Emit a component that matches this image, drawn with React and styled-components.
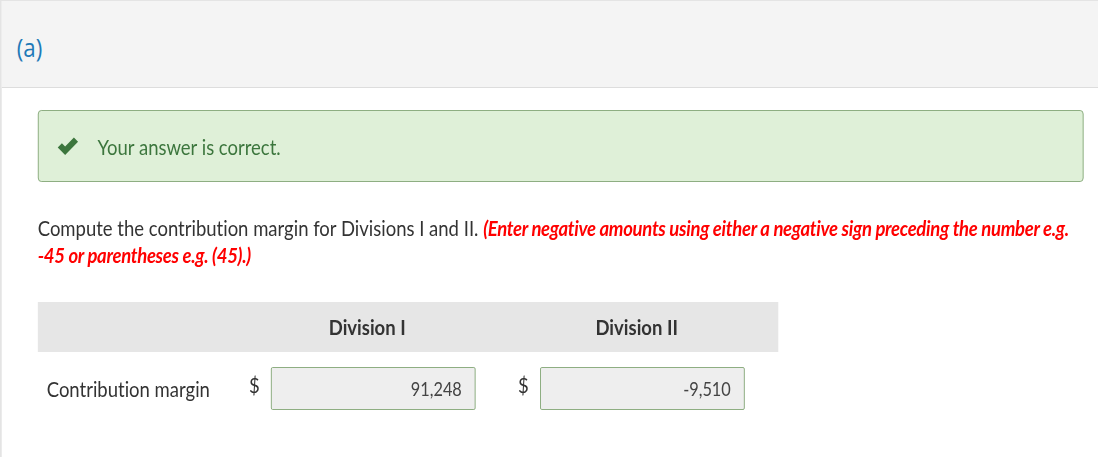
import React from "react";
import styled, { createGlobalStyle } from "styled-components";

/* The reference is rendered horizontally condensed; one scaleX on the
   whole sheet reproduces that while everything inside stays in normal flow. */
const SQUEEZE = 0.86;
const u = (px) => `${(px / SQUEEZE).toFixed(2)}px`;

const Global = createGlobalStyle`
  html, body { margin: 0; padding: 0; background: #fff; overflow: hidden; }
  body {
    font-family: Lato, "Liberation Sans", sans-serif;
    color: #333;
    font-variant-ligatures: none;
    font-feature-settings: "liga" 0, "clig" 0;
  }
`;

const Viewport = styled.div`
  width: 1098px;
  height: 457px;
  overflow: hidden;
`;

const Sheet = styled.div`
  width: ${u(1098)};
  height: 457px;
  box-sizing: border-box;
  border-left: ${u(2)} solid #e4e4e4;
  border-top: 1px solid #e4e4e4;
  transform: scaleX(${SQUEEZE});
  transform-origin: 0 0;
`;

const Header = styled.div`
  height: 87px;
  background: #f4f4f4;
  border-bottom: 1px solid #dddddd;
  display: flex;
  align-items: center;
  padding-left: ${u(15)};
  padding-top: 6px;
  box-sizing: border-box;
`;

const PartLabel = styled.span`
  font-family: "Open Sans", sans-serif;
  font-size: 26px;
  color: #1f7ab8;
`;

const Body = styled.div`
  padding: 22px ${u(14)} 0 ${u(36)};
`;

const Alert = styled.div`
  height: 72px;
  box-sizing: border-box;
  background: #dff0d8;
  border: 1px solid #86a97a;
  border-radius: 4px;
  display: flex;
  align-items: center;
  padding-left: ${u(17)};
  gap: ${u(18)};
`;

const AlertText = styled.span`
  font-size: 21.5px;
  color: #3c763d;
  margin-top: 1px;
`;

const Question = styled.p`
  margin: 33px 0 0 0;
  font-size: 21.5px;
  line-height: 27px;
  color: #333;
`;

const Hint = styled.span`
  color: #ff0000;
  font-weight: bold;
  font-style: italic;
  letter-spacing: -0.35px;
`;

const Table = styled.div`
  margin-top: 33px;
  display: grid;
  grid-template-columns: ${u(202)} ${u(31)} ${u(205)} ${u(19)} ${u(45)} ${u(205)} ${u(34)};
`;

const HeadRow = styled.div`
  grid-column: 1 / -1;
  display: grid;
  grid-template-columns: subgrid;
  background: #e6e6e6;
  height: 50px;
`;

const HeadCell = styled.div`
  grid-column: ${(p) => p.$col};
  display: flex;
  align-items: center;
  justify-content: center;
  font-size: 21.5px;
  font-weight: bold;
  color: #333;
`;

const RowLabel = styled.div`
  display: flex;
  align-items: center;
  padding-left: ${u(9)};
  font-size: 21.5px;
  height: 43px;
  margin-top: 15px;
`;

const Dollar = styled.div`
  grid-column: ${(p) => p.$col};
  display: flex;
  align-items: center;
  justify-content: flex-end;
  padding-right: ${u(11)};
  font-size: 21.5px;
  height: 43px;
  margin-top: 13px;
  padding-bottom: 4px;
  box-sizing: border-box;
`;

const Input = styled.div`
  margin-top: 15px;
  height: 43px;
  box-sizing: border-box;
  background: #eeeeee;
  border: 1px solid #86a97a;
  border-radius: 2px;
  display: flex;
  align-items: center;
  justify-content: flex-end;
  padding-right: ${u(13)};
  font-size: 19px;
  color: #444;
`;

const Check = () => (
  <svg width={u(24)} height="21" viewBox="0 0 26 22" preserveAspectRatio="none">
    <path d="M2 12 L6.5 7.5 L10 11 L19.5 1.5 L24 6 L10 20 Z" fill="#3c763d" />
  </svg>
);

export default function App() {
  return (
    <>
      <Global />
      <Viewport>
        <Sheet>
          <Header>
            <PartLabel>(a)</PartLabel>
          </Header>
          <Body>
            <Alert>
              <Check />
              <AlertText>Your answer is correct.</AlertText>
            </Alert>
            <Question>
              Compute the contribution margin for Divisions I and II.{" "}
              <Hint>
                (Enter negative amounts using either a negative sign preceding the number e.g. -45 or
                parentheses e.g. (45).)
              </Hint>
            </Question>
            <Table>
              <HeadRow>
                <HeadCell $col="2 / 5">Division I</HeadCell>
                <HeadCell $col="5 / 8">Division II</HeadCell>
              </HeadRow>
              <RowLabel>Contribution margin</RowLabel>
              <Dollar $col="2 / 3">$</Dollar>
              <Input>91,248</Input>
              <Dollar $col="4 / 6">$</Dollar>
              <Input>-9,510</Input>
            </Table>
          </Body>
        </Sheet>
      </Viewport>
    </>
  );
}
